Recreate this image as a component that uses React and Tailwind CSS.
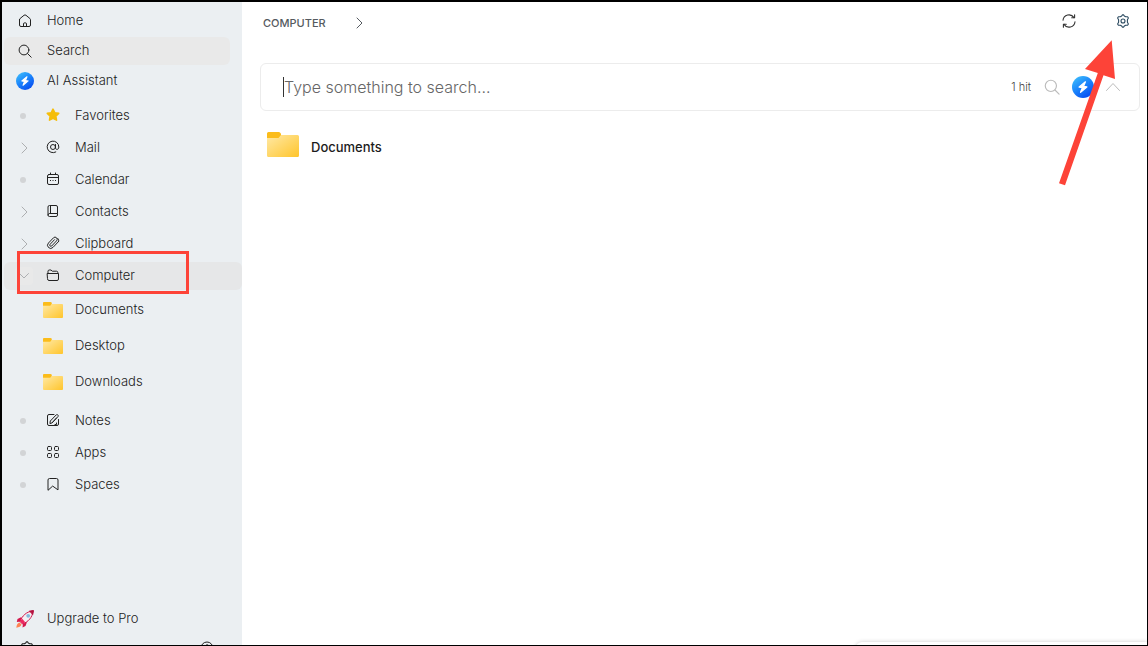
import React, { useState } from 'react'

const stroke = {
  fill: 'none',
  stroke: 'currentColor',
  strokeLinecap: 'round',
  strokeLinejoin: 'round',
}

function HomeIcon() {
  return (
    <svg className="size-[14px]" viewBox="0 0 14 14" {...stroke}>
      <path d="M1.5 5.700v5.300a1.500 1.500 0 0 0 1.500 1.500h8a1.500 1.500 0 0 0 1.500-1.500V5.700a1.600 1.600 0 0 0-.6-1.200L8 1.300a1.600 1.600 0 0 0-2 0L2.100 4.500a1.600 1.600 0 0 0-.6 1.200z" />
      <path d="M5.500 12.500V10A1.200 1.200 0 0 1 6.700 8.800h.6A1.200 1.200 0 0 1 8.500 10v2.500" />
    </svg>
  )
}

function SearchIcon({ className }) {
  return (
    <svg className={className} viewBox="0 0 14 14" {...stroke}>
      <circle cx="6" cy="6" r="4.900" />
      <path d="m9.600 9.600 3.600 3.600" />
    </svg>
  )
}

function AssistantIcon({ className }) {
  return (
    <svg className={className} viewBox="0 0 20 20">
      <defs>
        <linearGradient id="assistant" x1="0.1" y1="0" x2="0.8" y2="1">
          <stop offset="0" stopColor="#3fc0fb" />
          <stop offset="0.5" stopColor="#1a83fb" />
          <stop offset="1" stopColor="#0548f0" />
        </linearGradient>
      </defs>
      <circle cx="10" cy="10" r="10" fill="url(#assistant)" />
      <path
        d="M12.200 5.300 6.500 10l3 .5-1.700 4.300 5.700-4.900-3-.5z"
        fill="#fff"
        stroke="#fff"
        strokeWidth="1.200"
        strokeLinejoin="round"
      />
    </svg>
  )
}

function StarIcon() {
  return (
    <svg className="size-[14px]" viewBox="0 0 14 14">
      <path
        d="m7 1.200 1.700 3.500 4 .6-2.900 2.800.7 4L7 10.300l-3.500 1.800.7-4-2.900-2.800 4-.6z"
        fill="#f5be0b"
        stroke="#f5be0b"
        strokeWidth="1.600"
        strokeLinejoin="round"
      />
    </svg>
  )
}

function MailIcon() {
  return (
    <svg className="size-[14px]" viewBox="0 0 14 14" {...stroke}>
      <circle cx="7" cy="7" r="2.500" />
      <path d="M9.500 4.500v3.300c0 1 .6 1.600 1.500 1.600 1.100 0 1.800-1 1.800-2.400A5.800 5.800 0 1 0 9.800 12" />
    </svg>
  )
}

function CalendarIcon() {
  return (
    <svg className="size-[14px]" viewBox="0 0 14 14" {...stroke}>
      <rect x="1.500" y="2.500" width="11" height="10" rx="1.500" />
      <path d="M1.500 5.500h11M4.500 1v1.500M9.500 1v1.500" />
      <path d="M4 8.500h1M6.500 8.500h1M9 8.500h1" strokeLinecap="butt" />
    </svg>
  )
}

function ContactsIcon() {
  return (
    <svg className="size-[14px]" viewBox="0 0 14 14" {...stroke}>
      <path d="M4.500 9.500v-8H10A1.500 1.500 0 0 1 11.500 3v6.500H4" />
      <path d="M4.500 1.500H3.500A1.500 1.500 0 0 0 2 3v8a1.500 1.500 0 0 0 1.500 1.500H10a1.500 1.500 0 0 0 1.500-1.500V9.500H3.500A1.500 1.500 0 0 0 2 11" />
    </svg>
  )
}

function ClipIcon() {
  return (
    <svg className="size-[14px]" viewBox="0 0 24 24" {...stroke} strokeWidth="1.700">
      <path d="M21.500 9.500 12 19.500a5.400 5.400 0 0 1-7.700.2 5.400 5.400 0 0 1-.1-7.600l8.600-9a3.700 3.700 0 0 1 5.300 0 3.700 3.700 0 0 1 0 5.200l-8.300 8.800a2 2 0 0 1-2.800 0 2 2 0 0 1 0-2.800l7.600-8" />
      <path d="M21.500 9.500c1-2 .3-4-1.500-5.500" />
    </svg>
  )
}

function ComputerIcon() {
  return (
    <svg className="size-[14px]" viewBox="0 0 14 14" {...stroke}>
      <path d="M1.500 5.500h11v5.500a1.500 1.500 0 0 1-1.500 1.500H3A1.500 1.500 0 0 1 1.500 11z" />
      <path d="M2 5.500V3.200c0-.7.500-1.200 1.200-1.200h1.800l1.300 1.200h4.200c.8 0 1.300.500 1.300 1.200v1.100" />
    </svg>
  )
}

function NotesIcon() {
  return (
    <svg className="size-[14px]" viewBox="0 0 14 14" {...stroke}>
      <path d="M8 1.500H3A1.500 1.500 0 0 0 1.500 3v8A1.500 1.500 0 0 0 3 12.500h8a1.500 1.500 0 0 0 1.500-1.500V6.500" />
      <path d="M4 10.200 4.300 8l6-6.200c.9-.9 2.600.6 1.700 1.700L6.200 9.700zM6.200 9.700 10.500 5M9 11.500h1.500V10" />
    </svg>
  )
}

function AppsIcon() {
  return (
    <svg className="size-[14px]" viewBox="0 0 14 14" {...stroke}>
      <rect x="1.500" y="1.500" width="4" height="4" rx="1" />
      <rect x="8.500" y="1.500" width="4" height="4" rx="1" />
      <rect x="1.500" y="8.500" width="4" height="4" rx="1" />
      <rect x="8.500" y="8.500" width="4" height="4" rx="1" />
    </svg>
  )
}

function SpacesIcon() {
  return (
    <svg className="size-[14px]" viewBox="0 0 14 14" {...stroke}>
      <path d="M2 12.900V3A1.500 1.500 0 0 1 3.500 1.500h7A1.500 1.500 0 0 1 12 3v9.900L7 9.300z" />
    </svg>
  )
}

function FolderIcon({ className }) {
  return (
    <svg className={className} viewBox="0 0 32 25" preserveAspectRatio="none">
      <defs>
        <linearGradient id="folder" x1="0" y1="0" x2="1" y2="1">
          <stop offset="0" stopColor="#ffe9a6" />
          <stop offset="1" stopColor="#ffc52c" />
        </linearGradient>
      </defs>
      <path d="M0 1.500A1.500 1.500 0 0 1 1.500 0h10A2.500 2.500 0 0 1 14 3v4H0z" fill="#fbbc1a" />
      <path d="M0 6h11.500l2.500-3h16.500A1.500 1.500 0 0 1 32 4.500v19a1.500 1.500 0 0 1-1.500 1.500h-29A1.500 1.500 0 0 1 0 23.500z" fill="url(#folder)" />
    </svg>
  )
}

function RocketIcon() {
  return (
    <svg className="size-[18px]" viewBox="0 0 18 18">
      <path d="M5.500 7 1.500 9 .8 12l4-.5zM11 12l-1.500 4-3 1.500.5-4z" fill="#d3174c" />
      <path d="M3.500 12.500C1.500 13 .6 15 .3 17.700 3 17.400 5 16.500 5.500 14.500z" fill="#ff8352" />
      <path d="M4 11.500C6 6 10.500 1.500 17 1 16.500 7.500 12 12 6.500 14z" fill="#f4eff3" stroke="#d3174c" strokeWidth="1" />
      <path d="M13.500 1.200 17.500.5l-.8 4C15.800 3.300 14.800 2 13.500 1.200z" fill="#b5123f" stroke="#b5123f" />
      <path d="m4 11.500 2-3 3.300 3.700L6.500 14z" fill="#ee2a60" />
      <circle cx="12.200" cy="5.800" r="1.900" fill="#84b9dc" />
    </svg>
  )
}

function RefreshIcon() {
  return (
    <svg className="size-[14px]" viewBox="0 0 14 14" {...stroke} strokeWidth="1.100">
      <path d="M1 6.300A6 6 0 0 1 12 3.600M13 7.700A6 6 0 0 1 2 10.400" />
      <path d="M12.600.8v3H9.700M1.400 13.200v-3h2.900" />
    </svg>
  )
}

function GearIcon() {
  return (
    <svg className="size-[14px]" viewBox="0 0 14 14" {...stroke} strokeWidth="1.100">
      <path d="M5.700 2 6.300.9h1.400L8.300 2l1.400.8 1.900-.1.800 1.300-1 1.700v2.600l1 1.700-.8 1.300-1.900-.1-1.400.8-.6 1.100H6.300L5.700 12l-1.400-.8-1.900.1L1.600 10l1-1.700V5.700L1.600 4l.8-1.300 1.900.1z" />
      <circle cx="7" cy="7" r="2" />
    </svg>
  )
}

function HelpIcon() {
  return (
    <svg className="size-[14px]" viewBox="0 0 14 14" {...stroke}>
      <circle cx="7" cy="7" r="6" />
      <path d="M5.300 5.500a1.800 1.800 0 1 1 2.400 1.800c-.5.200-.7.500-.7 1" />
    </svg>
  )
}

function Marker({ kind }) {
  if (kind === 'dot') {
    return <span className="mr-[2px] size-[6px] rounded-full bg-[#d2d4d6]" />
  }
  if (kind === 'open') {
    return (
      <svg className="h-[6px] w-[10px] text-[#adafb1]" viewBox="0 0 10 6" {...stroke}>
        <path d="m.5.500 4.500 4.500L9.500.500" />
      </svg>
    )
  }
  return (
    <svg className="h-3 w-[7px] text-[#adafb1]" viewBox="0 0 7 12" {...stroke}>
      <path d="m1 1 5 5-5 5" />
    </svg>
  )
}

const topItems = [
  { label: 'Home', icon: <HomeIcon /> },
  { label: 'Search', icon: <SearchIcon className="size-[14px]" />, active: true },
  { label: 'AI Assistant', icon: <AssistantIcon className="size-[18px]" /> },
]

const upperItems = [
  { label: 'Favorites', icon: <StarIcon />, marker: 'dot' },
  { label: 'Mail', icon: <MailIcon />, marker: 'closed' },
  { label: 'Calendar', icon: <CalendarIcon />, marker: 'dot' },
  { label: 'Contacts', icon: <ContactsIcon />, marker: 'closed' },
  { label: 'Clipboard', icon: <ClipIcon />, marker: 'closed' },
  { label: 'Computer', icon: <ComputerIcon />, marker: 'open', active: true },
]

const lowerItems = [
  { label: 'Notes', icon: <NotesIcon />, marker: 'dot' },
  { label: 'Apps', icon: <AppsIcon />, marker: 'dot' },
  { label: 'Spaces', icon: <SpacesIcon />, marker: 'dot' },
]

const folders = ['Documents', 'Desktop', 'Downloads']

function TopItem({ icon, label, active }) {
  return (
    <button className={`flex h-7 items-center gap-3 rounded-md pl-[11px] ${active ? 'bg-[#e9e9e9]' : ''}`}>
      <span className="flex w-5 justify-center">{icon}</span>
      {label}
    </button>
  )
}

function TreeItem({ icon, label, marker, active }) {
  return (
    <button className={`flex h-7 items-center rounded-md pl-[11px] ${active ? 'bg-[#e6e7e8]' : ''}`}>
      <span className={`mr-[10px] flex size-[18px] items-center justify-center rounded-sm ${active ? 'bg-[#e9e9e9]' : ''}`}>
        <Marker kind={marker} />
      </span>
      <span className="mr-3 flex w-5 justify-center pb-[2px]">{icon}</span>
      {label}
    </button>
  )
}

function Sidebar() {
  return (
    <aside className="flex w-60 shrink-0 flex-col bg-[#ebeff2] pl-[2px] pt-[5px] text-[13px] font-light text-[#222]">
      <nav className="flex flex-col gap-[2px] pr-3">
        {topItems.map((item) => (
          <TopItem key={item.label} {...item} />
        ))}
      </nav>

      <nav className="mt-[7px] flex flex-col gap-1">
        {upperItems.map((item) => (
          <TreeItem key={item.label} {...item} />
        ))}
      </nav>
      <div className="mt-[2px] flex flex-col">
        {folders.map((name) => (
          <button key={name} className="flex h-9 items-center gap-3 pl-[39px]">
            <FolderIcon className="h-4 w-5" />
            {name}
          </button>
        ))}
      </div>
      <nav className="mt-[7px] flex flex-col gap-1">
        {lowerItems.map((item) => (
          <TreeItem key={item.label} {...item} />
        ))}
      </nav>

      <div className="mt-auto flex flex-col">
        <TopItem icon={<RocketIcon />} label="Upgrade to Pro" />
        <div className="flex h-3 items-start justify-between overflow-hidden pl-4 pr-7 pt-2">
          <button aria-label="Preferences"><GearIcon /></button>
          <button aria-label="Help"><HelpIcon /></button>
        </div>
      </div>
    </aside>
  )
}

function App() {
  const [query, setQuery] = useState('')

  return (
    <div className="relative flex h-screen overflow-hidden border-b border-l-2 border-r border-t-2 border-black bg-white font-['Inter',sans-serif]">
      <Sidebar />

      <main className="flex min-w-0 flex-1 flex-col pl-[18px] pr-[7px]">
        {/* Breadcrumb and toolbar */}
        <header className="flex h-[42px] items-center pl-[3px] pr-[10px] text-[#333]">
          <span className="text-[11px] font-medium text-[#555a60]">COMPUTER</span>
          <svg className="ml-[30px] h-3 w-[7px] text-[#555a60]" viewBox="0 0 7 12" {...stroke}>
            <path d="m1 1 5 5-5 5" />
          </svg>
          <div className="ml-auto flex gap-10 pb-1">
            <button aria-label="Refresh"><RefreshIcon /></button>
            <button aria-label="Settings" className="text-[#2b4a60]"><GearIcon /></button>
          </div>
        </header>

        {/* Search box */}
        <div className="mt-[19px] flex h-12 items-center rounded-md border border-[#ececec] pl-[22px] pr-[19px]">
          <input
            aria-label="Search"
            className="h-5 min-w-0 flex-1 border-l border-[#333] text-base font-light text-[#333] outline-none placeholder:text-[#666]"
            placeholder="Type something to search..."
            value={query}
            onChange={(e) => setQuery(e.target.value)}
          />
          <span className="mr-[13px] text-[11px] font-light text-[#444]">1 hit</span>
          <button aria-label="Run search" className="mr-3 text-[#bbb]">
            <SearchIcon className="size-4" />
          </button>
          <button aria-label="Ask AI Assistant" className="mr-3">
            <AssistantIcon className="size-[22px]" />
          </button>
          <button aria-label="Collapse" className="text-[#bbb]">
            <svg className="h-2 w-[14px]" viewBox="0 0 14 8" {...stroke}>
              <path d="m.5 7.500 6.500-7 6.500 7" />
            </svg>
          </button>
        </div>

        {/* Results */}
        <button className="mt-[21px] flex items-start gap-3 pl-[7px] text-[13px]/[30px] font-medium text-[#1c1c1c]">
          <FolderIcon className="h-[25px] w-8" />
          Documents
        </button>
      </main>

      {/* Floating panel peeking in from the bottom edge */}
      <div className="absolute -bottom-4 right-0 h-[19px] w-[291px] rounded-tl-md bg-white shadow-[0_0_4px_rgba(0,0,0,0.2)]" />

      {/* Callouts */}
      <div className="absolute left-[15px] top-[249px] h-[43px] w-[172px] border-3 border-[#fd4338]" />
      <svg className="absolute right-[32px] top-[38px] h-[147px] w-[58px]" viewBox="0 0 58 147" fill="#fd4338">
        <path d="M54.700.3 58 39l-11.500-3.800L8 145.200l-6-2L40.800 33.100 28 29z" />
      </svg>
    </div>
  )
}

export default App
